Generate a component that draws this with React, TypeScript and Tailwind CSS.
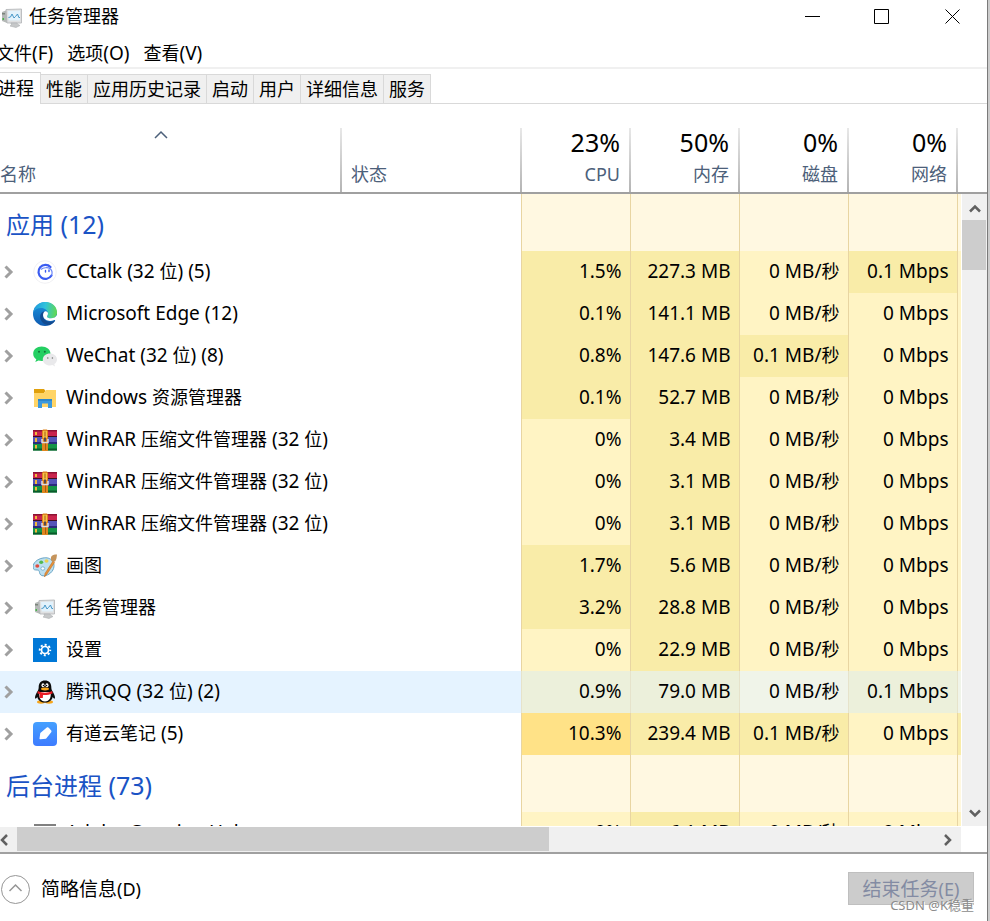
import type { ReactNode } from 'react';

const low = 'bg-[#fff4c4]';
const mid = 'bg-[#f9eca8]';
const high = 'bg-[#ffe287]';
const selLow = 'bg-[#f0f4e9]';
const selMid = 'bg-[#ecf0db]';
const none = 'bg-[#fff8e1]';

function MonitorIcon() {
  return (
    <svg viewBox="0 0 24 24" className="size-6">
      <path d="M2 7l5-2v13l-5-2z" fill="#b4b8b6" />
      <path d="M2 8h3v1.500H2z" fill="#7d857d" />
      <path d="M2.500 13h1.500v2H2.500z" fill="#49b54c" />
      <path d="M6 4.500L21.500 4v14L7 18z" fill="#dfe0e1" stroke="#b0b3b5" strokeWidth=".8" />
      <path d="M8 6l12-.4v10L8.800 15.500z" fill="#e2f2fc" />
      <path d="M8.500 12.500l2-.5 1.500-3 2 4 1.500-1.500 2-2.500 1.300 3.500h1.200" fill="none" stroke="#4697c8" />
      <path d="M11 18h6l1 1.500 2 1-4 2-6-1.500 1.500-1z" fill="#c6c8c9" stroke="#adb0b2" strokeWidth=".6" />
    </svg>
  );
}

function CCtalkIcon() {
  return (
    <svg viewBox="0 0 24 24" className="size-6">
      <circle cx="12" cy="12" r="11.300" fill="#fff" stroke="#ececf0" strokeWidth=".8" />
      <path d="M17.500 7A7 7 0 1 0 18.500 15.500" fill="none" stroke="#3a5bf0" strokeWidth="2.200" strokeLinecap="round" />
      <path d="M8 9.500c2-2 7-2.500 9.500-.5 2 2 1.800 4.500 1 6.500" fill="none" stroke="#6a86f8" strokeWidth="1.200" />
      <path d="M12.500 10.500v1.500M16 10v1.500" stroke="#3a5bf0" strokeWidth="1.400" strokeLinecap="round" />
    </svg>
  );
}

function EdgeIcon() {
  return (
    <svg viewBox="0 0 24 24" className="size-6">
      <defs>
        <linearGradient id="edgeTop" x1="0" y1="0.400" x2="1" y2="0.500">
          <stop offset="0" stopColor="#1f97dc" />
          <stop offset=".5" stopColor="#2fc2dc" />
          <stop offset="1" stopColor="#62d94f" />
        </linearGradient>
        <linearGradient id="edgeLeft" x1="0" y1="0" x2="0" y2="1">
          <stop offset="0" stopColor="#1b95df" />
          <stop offset="1" stopColor="#0f5ab0" />
        </linearGradient>
      </defs>
      <circle cx="12" cy="12" r="12" fill="url(#edgeLeft)" />
      <path d="M0 11C1 4.500 6 0 12.500 0 19 0 24 4.500 24 10.500c0 3.500-2.500 5.800-6 5.800-2.500 0-4-.8-4-1.800 0-.8 1-1.200 1-3 0-2.800-3-5.500-7-5.500-3.500 0-6.800 1.800-8.500 5z" fill="url(#edgeTop)" />
      <path d="M10.500 9.500c-2.500 1-4 4-3 7.500 1.200 4 5 6.300 9 6 2.500-1 4.500-2.500 5.700-4.500-6 3-11 .5-12-3.500-.5-2 .3-4 1.800-5z" fill="#124a8f" />
      <path d="M12 9.300c-1.500 1-2.300 3-1.800 5 .9 3.800 5.800 6 11.200 3.800.7-.4 1.500.2 1 .9L26 16l-2-3c-1 2-3.300 3.300-6 3.300-2.500 0-4-.8-4-1.800 0-.8 1-1.200 1-3 0-1-1-2.400-3-2.200z" fill="#fff" />
    </svg>
  );
}

function WeChatIcon() {
  return (
    <svg viewBox="0 0 24 24" className="size-6">
      <path d="M8.700 2.500C3.900 2.500.2 5.600.2 9.700c0 2.300 1.200 4.200 3.100 5.500l-1 2.800 3.200-1.600c1 .3 2.100.5 3.200.5 4.800 0 8.800-3.100 8.800-7.200s-4-7.200-8.800-7.200z" fill="#24cf62" />
      <circle cx="6" cy="7.800" r="1" fill="#15713a" />
      <circle cx="11.800" cy="7.800" r="1" fill="#15713a" />
      <path d="M17 9.500c-4 0-7.200 2.600-7.200 6s3.200 6 7.200 6c.9 0 1.700-.1 2.500-.4l2.500 1.300-.7-2.300c1.700-1.100 2.700-2.700 2.700-4.600 0-3.400-3.100-6-7-6z" fill="#e9e9eb" />
      <circle cx="14.800" cy="14" r=".8" fill="#777" />
      <circle cx="19.400" cy="14" r=".8" fill="#777" />
    </svg>
  );
}

function FolderIcon() {
  return (
    <svg viewBox="0 0 24 24" className="size-6">
      <path d="M1 3h10l1.500 2-1.500 2H1z" fill="#e0a00c" />
      <path d="M1 7h10l2-3h10v17H1z" fill="#ffd466" />
      <path d="M5 22v-9h14v9h-4v-4.500h-6V22z" fill="#3c99dd" />
      <path d="M5 13h14v2H5z" fill="#2d86cb" />
    </svg>
  );
}

function WinRarIcon() {
  return (
    <svg viewBox="0 0 24 24" className="size-6">
      <path d="M0 2h24v6H0z" fill="#c9244d" />
      <path d="M0 2h24v1.500H0z" fill="#8c1334" />
      <path d="M0 9h24v6H0z" fill="#5455b8" />
      <path d="M0 14h24v2H0z" fill="#2b2c7c" />
      <path d="M0 16h24v6.500H0z" fill="#159447" />
      <path d="M0 20.500h24v2H0z" fill="#0a5a2b" />
      <path d="M0 8h24v1H0z" fill="#3f1020" />
      <path d="M2 4h2v3H2zM2 10h2v4H2zM2 17h2v3.500H2z" fill="#f2b93a" />
      <path d="M9 3l1-1.500h4L15 3v20H9z" fill="#df861f" />
      <path d="M10 3h4v7h-4z" fill="#f7c24a" />
      <path d="M12 3.500v5M12.500 15v7" stroke="#a55d10" />
      <path d="M9 11v3.500h6V11" fill="none" stroke="#dcdce2" strokeWidth="1.500" />
      <path d="M11 9.500h2v4h-2z" fill="#55484a" />
    </svg>
  );
}

function PaintIcon() {
  return (
    <svg viewBox="0 0 24 24" className="size-6">
      <path d="M10 4C4 5 0 9 0 13c0 3 2 3 4 3 3 0 2 2 3 4 1.500 3 7 2 10.500-1 4-3.500 4.500-9 2-12S14 3.300 10 4z" fill="#bcdff0" stroke="#5d9dc0" strokeWidth=".9" />
      <ellipse cx="4.300" cy="12" rx="2" ry="1.800" fill="#df4d41" />
      <ellipse cx="8.200" cy="8.300" rx="2" ry="1.700" fill="#51b852" />
      <ellipse cx="13.500" cy="7" rx="2" ry="1.700" fill="#ecd04e" />
      <ellipse cx="9.800" cy="14.500" rx="1.900" ry="1.700" fill="#fff" stroke="#5d9dc0" strokeWidth=".7" />
      <path d="M20 7l1.500 1.500L14 20l-2.500 3 .5-3.500z" fill="#e8923a" stroke="#b5651b" strokeWidth=".5" />
      <path d="M18 3c1-2 3-2.500 6-2.500-.3 3-.5 5-2 7l-2.500.5L18 6z" fill="#c5945c" />
    </svg>
  );
}

function SettingsIcon() {
  return (
    <svg viewBox="0 0 24 24" className="size-6">
      <rect width="24" height="24" fill="#0078d7" />
      <circle cx="12" cy="12" r="3.500" fill="none" stroke="#fff" strokeWidth="1.700" />
      <circle cx="12" cy="12" r="5.200" fill="none" stroke="#fff" strokeWidth="2" strokeDasharray="2.040 2.040" strokeDashoffset="1" />
    </svg>
  );
}

function QQIcon() {
  return (
    <svg viewBox="0 0 24 24" className="size-6">
      <ellipse cx="8" cy="22" rx="4" ry="1.700" fill="#f6a51b" />
      <ellipse cx="16" cy="22" rx="4" ry="1.700" fill="#f6a51b" />
      <path d="M12 .500c-4 0-6.300 2.700-6.300 6.500 0 1.500-.3 2.500-.7 3.500-1.500 2.500-3 5-3 7 0 1.500.8 1.700 2.300-.5C5 20.500 8 22.500 12 22.500s7-2 7.700-5.500c1.500 2.200 2.300 2 2.300.5 0-2-1.500-4.500-3-7-.4-1-.7-2-.7-3.500 0-3.800-2.300-6.500-6.300-6.500z" fill="#0b0b0b" />
      <path d="M6.500 12h11c1 5-1 9.500-5.500 9.500S5.500 17 6.500 12z" fill="#fff" />
      <ellipse cx="10" cy="5.300" rx="1.500" ry="2" fill="#fff" />
      <ellipse cx="14" cy="5.300" rx="1.500" ry="2" fill="#fff" />
      <circle cx="10.400" cy="5.500" r=".7" />
      <circle cx="13.600" cy="5.500" r=".7" />
      <ellipse cx="12" cy="9" rx="4" ry="1.400" fill="#f6a51b" />
      <path d="M5 11c4 2.300 10 2.300 14 0l.8 2.200c-3 1.600-7 2-9.800 1.800l-.2 3H6.500l.3-3.800-2.500-1z" fill="#e81d25" />
    </svg>
  );
}

function YoudaoIcon() {
  return (
    <svg viewBox="0 0 24 24" className="size-6">
      <defs>
        <linearGradient id="youdao" x1="0" y1="0" x2="0" y2="1">
          <stop offset="0" stopColor="#45a0ff" />
          <stop offset="1" stopColor="#3d7bff" />
        </linearGradient>
      </defs>
      <rect width="24" height="24" rx="4" fill="url(#youdao)" />
      <path d="M6.500 16.500l.8-5.500 6.200-5.200c1-.8 1.800-.5 2.500.2l2 2.300c.7.8.6 1.500 0 2.200L13 16.700l-5.500.6c-.8 0-1-.3-1-.8z" fill="#fff" />
    </svg>
  );
}

function GenericIcon() {
  return (
    <svg viewBox="0 0 24 24" className="size-6">
      <path d="M2 4h20v18H2z" fill="#fff" stroke="#808080" strokeWidth="2" />
    </svg>
  );
}

type Process = {
  name: string;
  icon: ReactNode;
  values: string[];
  shades: string[];
  selected?: boolean;
};

const apps: Process[] = [
  { name: 'CCtalk (32 位) (5)', icon: <CCtalkIcon />, values: ['1.5%', '227.3 MB', '0 MB/秒', '0.1 Mbps'], shades: [mid, mid, low, mid, low] },
  { name: 'Microsoft Edge (12)', icon: <EdgeIcon />, values: ['0.1%', '141.1 MB', '0 MB/秒', '0 Mbps'], shades: [mid, mid, low, low, low] },
  { name: 'WeChat (32 位) (8)', icon: <WeChatIcon />, values: ['0.8%', '147.6 MB', '0.1 MB/秒', '0 Mbps'], shades: [mid, mid, mid, low, low] },
  { name: 'Windows 资源管理器', icon: <FolderIcon />, values: ['0.1%', '52.7 MB', '0 MB/秒', '0 Mbps'], shades: [mid, mid, low, low, low] },
  { name: 'WinRAR 压缩文件管理器 (32 位)', icon: <WinRarIcon />, values: ['0%', '3.4 MB', '0 MB/秒', '0 Mbps'], shades: [low, mid, low, low, low] },
  { name: 'WinRAR 压缩文件管理器 (32 位)', icon: <WinRarIcon />, values: ['0%', '3.1 MB', '0 MB/秒', '0 Mbps'], shades: [low, mid, low, low, low] },
  { name: 'WinRAR 压缩文件管理器 (32 位)', icon: <WinRarIcon />, values: ['0%', '3.1 MB', '0 MB/秒', '0 Mbps'], shades: [low, mid, low, low, low] },
  { name: '画图', icon: <PaintIcon />, values: ['1.7%', '5.6 MB', '0 MB/秒', '0 Mbps'], shades: [mid, mid, low, low, low] },
  { name: '任务管理器', icon: <MonitorIcon />, values: ['3.2%', '28.8 MB', '0 MB/秒', '0 Mbps'], shades: [mid, mid, low, low, low] },
  { name: '设置', icon: <SettingsIcon />, values: ['0%', '22.9 MB', '0 MB/秒', '0 Mbps'], shades: [low, mid, low, low, low] },
  { name: '腾讯QQ (32 位) (2)', icon: <QQIcon />, values: ['0.9%', '79.0 MB', '0 MB/秒', '0.1 Mbps'], shades: [selMid, selMid, selLow, selMid, selLow], selected: true },
  { name: '有道云笔记 (5)', icon: <YoudaoIcon />, values: ['10.3%', '239.4 MB', '0.1 MB/秒', '0 Mbps'], shades: [high, mid, mid, low, mid] },
];

const background: Process[] = [
  { name: 'Adobe Genuine Helper', icon: <GenericIcon />, values: ['0%', '6.1 MB', '0 MB/秒', '0 Mbps'], shades: [low, mid, low, low, low] },
];

const tabs = ['性能', '应用历史记录', '启动', '用户', '详细信息', '服务'];

const usage = [
  { label: 'CPU', total: '23%' },
  { label: '内存', total: '50%' },
  { label: '磁盘', total: '0%' },
  { label: '网络', total: '0%' },
];

// Latin letters and digits are set one pixel larger than the Chinese beside them
function Mixed({ text, latin = 'text-[19px]' }: { text: string; latin?: string }) {
  return text.split(/([\x20-\x7e]+)/).filter(Boolean).map((part, i) =>
    /^[\x20-\x7e]/.test(part) ? <span key={i} className={`whitespace-pre ${latin}`}>{part}</span> : part
  );
}

function Chevron({ d, className }: { d: string; className: string }) {
  return (
    <svg viewBox="0 0 14 14" className={className} fill="none" stroke="currentColor">
      <path d={d} />
    </svg>
  );
}

function HeadCell({ children }: { children: ReactNode }) {
  return (
    <th scope="col" className="p-0 align-bottom font-normal">
      <div className="flex h-16">
        <div className="min-w-0 flex-1">{children}</div>
        <span className="w-0.5 bg-linear-to-b from-[#e8e8e8] to-[#b4b4b4]" />
      </div>
    </th>
  );
}

function GroupRow({ title }: { title: string }) {
  return (
    <tr className="h-[57px]">
      <th scope="rowgroup" colSpan={2} className="px-1.5 pt-1 pb-0 text-left text-2xl font-normal text-[#1a53c5]">
        <Mixed text={title} latin="text-[25px]" />
      </th>
      {usage.map((u) => (
        <td key={u.label} className={`border-l border-[#e8d5a2] p-0 ${none}`} />
      ))}
      <td className={`border-l border-[#e8d5a2] p-0 ${none}`} />
    </tr>
  );
}

function ProcessRow({ process }: { process: Process }) {
  const line = process.selected ? 'border-[#e6e3cb]' : 'border-[#e8d5a2]';
  return (
    <tr className="h-[42px]">
      <td className={`p-0 ${process.selected ? 'bg-[#e5f3ff]' : ''}`}>
        <div className="flex items-center">
          <button aria-label={`展开 ${process.name}`} className="w-[33px] pl-0.5 text-[#a0a0a0]">
            <Chevron d="M3.500 1.500l5.500 5.500-5.500 5.500" className="size-[14px] stroke-3" />
          </button>
          {process.icon}
          <span className="pb-0.5 pl-[9px] whitespace-nowrap"><Mixed text={process.name} /></span>
        </div>
      </td>
      <td className={`p-0 ${process.selected ? 'bg-[#e5f3ff]' : ''}`} />
      {process.values.map((value, i) => (
        <td key={i} className={`border-l pt-0 pr-2 pb-0.5 pl-0 text-right whitespace-nowrap ${line} ${process.shades[i]}`}>
          <Mixed text={value} />
        </td>
      ))}
      <td className={`border-l p-0 ${line} ${process.shades[4]}`} />
    </tr>
  );
}

export default function App() {
  return (
    <div className="flex h-screen bg-white font-['Noto_Sans','Noto_Sans_CJK_SC',sans-serif] text-lg leading-6 text-black">
      <div className="flex min-w-0 flex-1 flex-col overflow-hidden">
        <header className="flex h-[33px] shrink-0 items-center">
          <MonitorIcon />
          <h1 className="flex-1 pb-px pl-[5px]">任务管理器</h1>
          <button aria-label="最小化" className="flex h-full w-[70px] items-center justify-center">
            <svg viewBox="0 0 16 16" className="size-4" stroke="currentColor"><path d="M1 7.500h15" /></svg>
          </button>
          <button aria-label="最大化" className="flex h-full w-[70px] items-center justify-center">
            <svg viewBox="0 0 16 16" className="size-4" stroke="currentColor" fill="none"><path d="M.5 .5h14v14h-14z" /></svg>
          </button>
          <button aria-label="关闭" className="flex h-full w-[70px] items-center justify-center">
            <svg viewBox="0 0 16 16" className="size-4" stroke="currentColor"><path d="M1.500 .5l14 14M15.500 .5l-14 14" /></svg>
          </button>
        </header>

        <nav className="-ml-1 flex h-9 shrink-0 items-center gap-3.5 border-b-2 border-[#f0f0f0] pt-1.5">
          <button><Mixed text="文件(F)" /></button>
          <button><Mixed text="选项(O)" /></button>
          <button><Mixed text="查看(V)" /></button>
        </nav>

        <div role="tablist" className="flex h-[35px] shrink-0 items-end">
          <button role="tab" aria-selected="true" className="-ml-2 h-8 border-t border-r border-[#d9d9d9] px-1.5 pb-0.5">进程</button>
          {tabs.map((tab) => (
            <button key={tab} role="tab" aria-selected="false" className="h-[30px] border-y border-r border-[#d9d9d9] bg-[#f0f0f0] px-[5px]">
              {tab}
            </button>
          ))}
          <div className="h-px flex-1 bg-[#d9d9d9]" />
        </div>

        <table className="w-full shrink-0 table-fixed border-b-2 border-[#a0a0a0] text-[#4c607a]">
          <colgroup>
            <col className="w-[342px]" />
            <col />
            {usage.map((u) => <col key={u.label} className="w-[109px]" />)}
            <col className="w-[29px]" />
          </colgroup>
          <thead>
            <tr className="h-[89px]">
              <HeadCell>
                <button className="flex h-full w-full flex-col justify-between text-left">
                  <Chevron d="M1 10l6-6 6 6" className="ml-[-18px] size-[14px] self-center stroke-[1.5]" />
                  <span className="pb-1.5">名称</span>
                </button>
              </HeadCell>
              <HeadCell>
                <button className="flex h-full w-full items-end pb-1.5 pl-[9px]">状态</button>
              </HeadCell>
              {usage.map((u) => (
                <HeadCell key={u.label}>
                  <button className="flex h-full w-full flex-col items-end justify-between pr-[9px] pb-1.5">
                    <span className="pt-0.5 text-[25px] leading-6 text-black">{u.total}</span>
                    <span>{u.label}</span>
                  </button>
                </HeadCell>
              ))}
              <td />
            </tr>
          </thead>
        </table>

        <div className="flex min-h-0 flex-1">
          <div className="min-w-0 flex-1 overflow-hidden">
            <table className="w-full table-fixed">
              <colgroup>
                <col className="w-[341px]" />
                <col />
                {usage.map((u) => <col key={u.label} className="w-[109px]" />)}
                <col className="w-1" />
              </colgroup>
              <tbody>
                <GroupRow title="应用 (12)" />
                {apps.map((p, i) => <ProcessRow key={i} process={p} />)}
              </tbody>
              <tbody>
                <GroupRow title="后台进程 (73)" />
                {background.map((p, i) => <ProcessRow key={i} process={p} />)}
              </tbody>
            </table>
          </div>
          <div className="ml-px flex w-[25px] flex-col bg-[#f0f0f0] text-[#606060]">
            <button aria-label="向上滚动" className="flex h-[26px] items-center justify-center pt-1">
              <Chevron d="M2 9.500l5-5 5 5" className="size-[14px] stroke-[2.5]" />
            </button>
            <div className="mr-px h-[50px] bg-[#cdcdcd]" />
            <button aria-label="向下滚动" className="mt-auto flex h-[26px] items-center justify-center">
              <Chevron d="M2 4.500l5 5 5-5" className="size-[14px] stroke-[2.5]" />
            </button>
          </div>
        </div>

        <div className="mt-px flex h-[25px] shrink-0 text-[#606060]">
          <div className="flex flex-1 bg-[#f0f0f0]">
            <button aria-label="向左滚动" className="flex w-[17px] items-center">
              <Chevron d="M7 2L2 7l5 5" className="size-[14px] stroke-[2.5]" />
            </button>
            <div className="flex-1">
              <div className="h-6 w-[58%] bg-[#cdcdcd]" />
            </div>
            <button aria-label="向右滚动" className="flex w-[26px] items-center justify-center">
              <Chevron d="M4 2l5 5-5 5" className="size-[14px] stroke-[2.5]" />
            </button>
          </div>
          <div className="w-[26px]" />
        </div>

        <footer className="relative flex shrink-0 items-center justify-between border-t-2 border-[#a0a0a0] pt-[18px] pr-[13px] pb-4 text-[19px]">
          <button className="flex items-center gap-[11px]">
            <svg viewBox="0 0 30 30" className="size-[30px]" fill="none" stroke="#969696">
              <circle cx="15.500" cy="15.500" r="14" />
              <path d="M9.500 17l6-6 6 6" strokeWidth="1.500" />
            </svg>
            <span>简略信息<span className="text-lg">(D)</span></span>
          </button>
          <button disabled className="h-[33px] w-[126px] border border-[#bfbfbf] bg-[#cccccc] text-[#838ba3]">
            结束任务<span className="text-lg">(E)</span>
          </button>
          <span className="absolute right-[13px] bottom-1.5 text-[13px] leading-5 text-[#8c8c8c] [text-shadow:1px_1px_0_#fff]">CSDN @K稳重</span>
        </footer>
      </div>
      <div className="w-[3px] shrink-0 border-l border-[#7a7a7a] bg-[#cccccc]" />
    </div>
  );
}
